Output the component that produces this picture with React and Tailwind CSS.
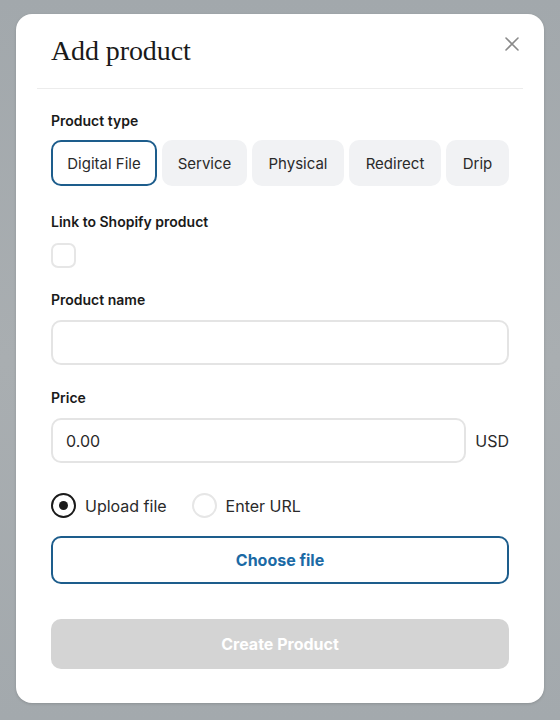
import React, { useState } from 'react';

const types = [
  { label: 'Digital File', w: 'w-[106px]' },
  { label: 'Service', w: 'w-[85px]' },
  { label: 'Physical', w: 'w-[92px]' },
  { label: 'Redirect', w: 'w-[92px]' },
  { label: 'Drip', w: 'w-[63px]' },
];

function App() {
  const [type, setType] = useState('Digital File');
  const [mode, setMode] = useState('upload');
  const [linked, setLinked] = useState(false);

  return (
    <div
      className="min-h-screen w-full bg-[linear-gradient(180deg,#a2a8ac_0%,#a9aeb1_50%,#a3a9ad_100%)] pt-[14px] pb-[16px]"
      style={{ fontFamily: 'Inter, "Noto Sans", sans-serif' }}
    >
      <div className="mx-[16px] bg-white rounded-[16px] pb-[34px] shadow-[0_1px_3px_rgba(0,0,0,0.15)]">
        {/* Header */}
        <div className="flex items-start justify-between pl-[35px] pr-[22px] pt-[19px]">
          <h1
            className="text-[28px] leading-[36px] text-[#1a1a1a] tracking-[-0.1px]"
            style={{ fontFamily: '"Liberation Serif", "DejaVu Serif", serif' }}
          >
            Add product
          </h1>
          <button className="mt-[1px] text-[#8a8a8a]">
            <svg width="20" height="20" viewBox="0 0 20 20" fill="none" stroke="currentColor" strokeWidth="1.6" strokeLinecap="round">
              <path d="M4 4L16 16M16 4L4 16" />
            </svg>
          </button>
        </div>
        <div className="mx-[21px] mt-[19px] border-t border-[#ececec]" />

        <div className="px-[35px] pt-[23px]">
          {/* Product type */}
          <div className="text-[14px] font-semibold text-[#1a1a1a] leading-[18px]">Product type</div>
          <div className="flex justify-between mt-[10px]">
            {types.map((t) => (
              <button
                key={t.label}
                onClick={() => setType(t.label)}
                className={`${t.w} h-[46px] rounded-[10px] text-[15px] text-[#2a2a2a] ${
                  type === t.label
                    ? 'bg-white border-2 border-[#1d5d8c]'
                    : 'bg-[#f1f2f4] border-2 border-transparent'
                }`}
              >
                <span className="relative top-[1px]">{t.label}</span>
              </button>
            ))}
          </div>

          {/* Shopify */}
          <div className="mt-[27px] text-[14px] font-semibold text-[#1a1a1a] leading-[18px]">Link to Shopify product</div>
          <button
            onClick={() => setLinked(!linked)}
            className={`mt-[12px] block w-[25px] h-[25px] rounded-[7px] border-2 ${linked ? 'border-[#1d5d8c] bg-[#1d5d8c]' : 'border-[#e6e6e6] bg-white'}`}
          />

          {/* Product name */}
          <div className="mt-[23px] text-[14px] font-semibold text-[#1a1a1a] leading-[18px]">Product name</div>
          <input
            className="mt-[11px] w-full h-[45px] rounded-[10px] border-2 border-[#e4e4e4] px-[14px] text-[16px] outline-none"
            type="text"
          />

          {/* Price */}
          <div className="mt-[24px] text-[14px] font-semibold text-[#1a1a1a] leading-[18px]">Price</div>
          <div className="mt-[11px] flex items-center gap-[9px]">
            <input
              className="grow h-[45px] rounded-[10px] border-2 border-[#e4e4e4] px-[13px] text-[16px] text-[#2a2a2a] outline-none"
              type="text"
              defaultValue="0.00"
            />
            <span className="text-[16px] text-[#2a2a2a]">USD</span>
          </div>

          {/* Mode */}
          <div className="mt-[30px] flex items-center gap-[25px]">
            <button onClick={() => setMode('upload')} className="flex items-center gap-[9px]">
              <span className={`w-[25px] h-[25px] rounded-full border-2 flex items-center justify-center ${mode === 'upload' ? 'border-[#1a1a1a]' : 'border-[#e6e6e6]'}`}>
                {mode === 'upload' && <span className="w-[9px] h-[9px] rounded-full bg-[#1a1a1a]" />}
              </span>
              <span className="text-[16px] text-[#2a2a2a]">Upload file</span>
            </button>
            <button onClick={() => setMode('url')} className="flex items-center gap-[9px]">
              <span className={`w-[25px] h-[25px] rounded-full border-2 flex items-center justify-center ${mode === 'url' ? 'border-[#1a1a1a]' : 'border-[#e6e6e6]'}`}>
                {mode === 'url' && <span className="w-[9px] h-[9px] rounded-full bg-[#1a1a1a]" />}
              </span>
              <span className="text-[16px] text-[#2a2a2a]">Enter URL</span>
            </button>
          </div>

          <button className="mt-[18px] w-full h-[48px] rounded-[10px] border-2 border-[#1d5d8c] bg-white text-[16px] font-bold text-[#1b6aa5]">
            Choose file
          </button>

          <button disabled className="mt-[35px] w-full h-[50px] rounded-[10px] bg-[#d4d4d4] text-[16px] font-bold text-white">
            Create Product
          </button>
        </div>
      </div>
    </div>
  );
}

export default App;
